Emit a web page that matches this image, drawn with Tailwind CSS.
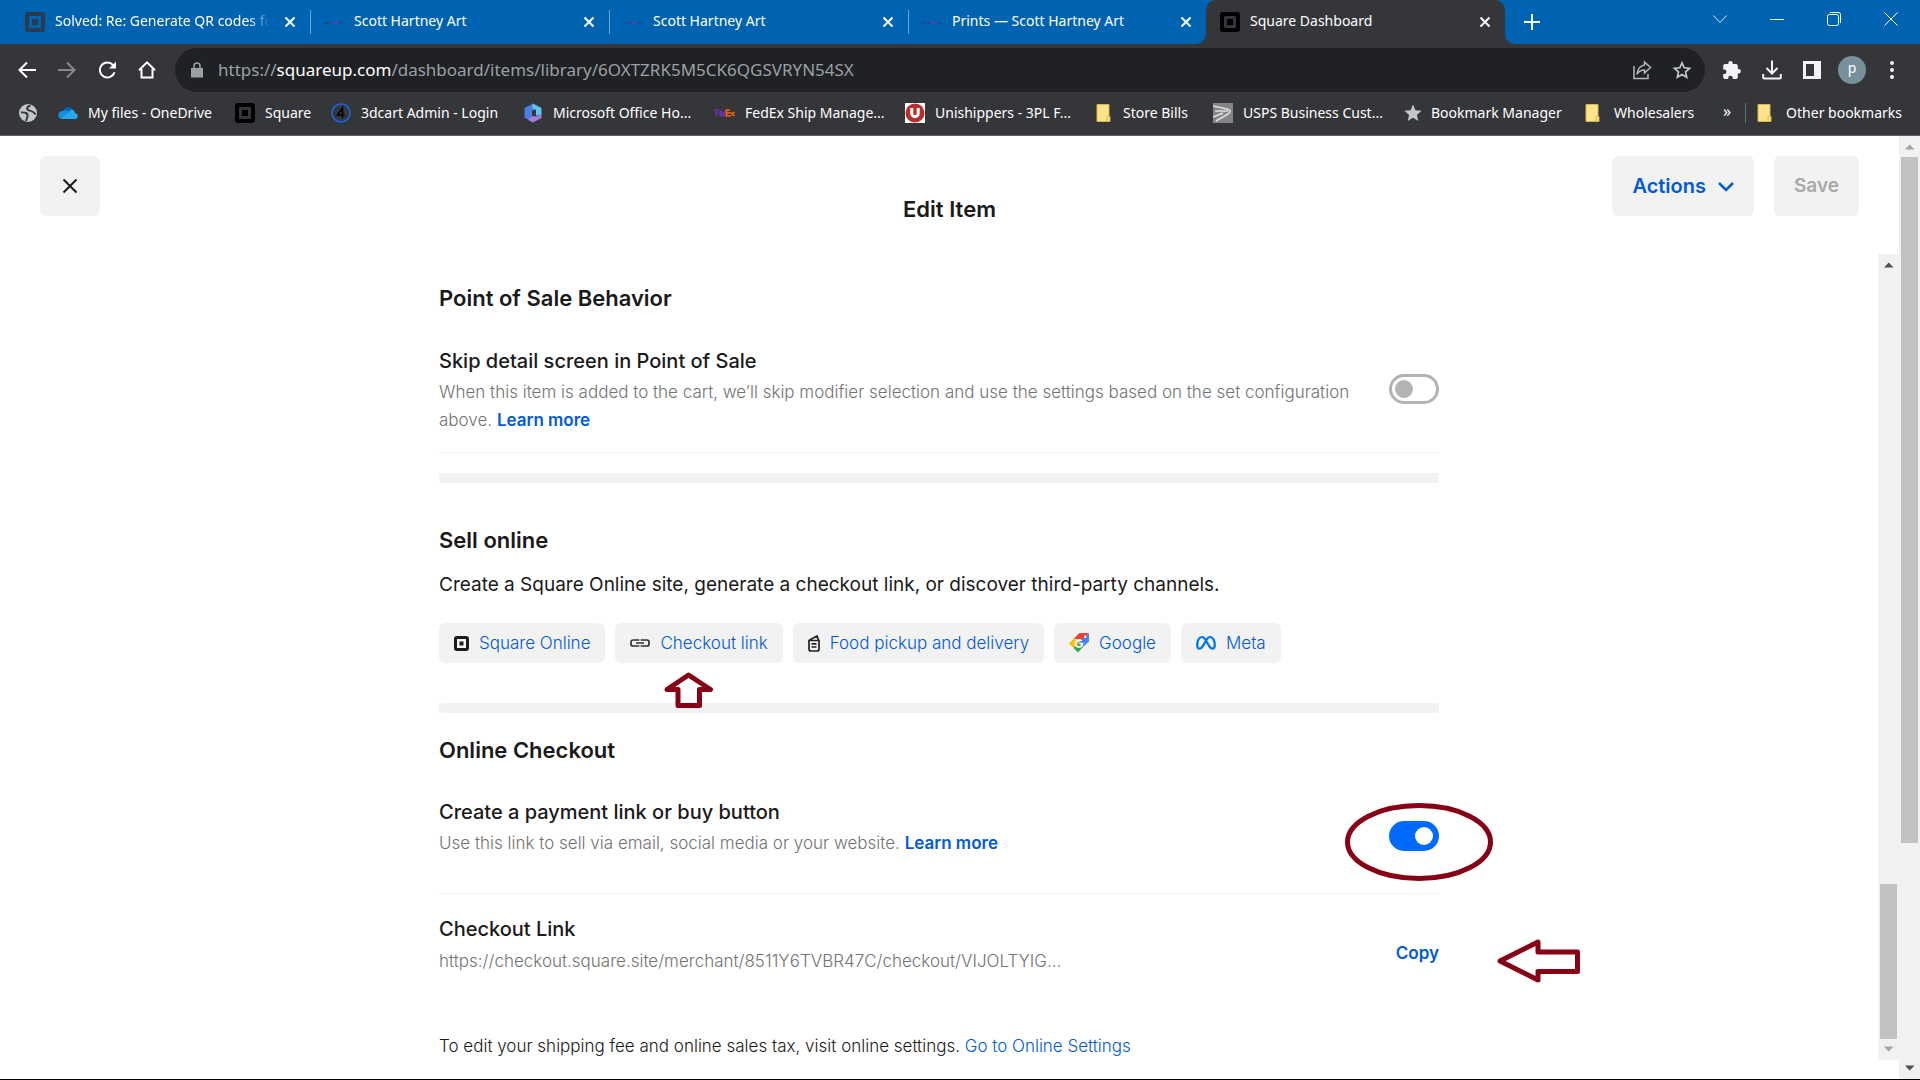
<!DOCTYPE html>
<html lang="en">
<head>
    <meta charset="UTF-8">
    <meta name="viewport" content="width=device-width, initial-scale=1.0">
    <title>Square Dashboard</title>
    <script src="https://cdn.jsdelivr.net/npm/@tailwindcss/browser@4"></script>
</head>
<body class="min-h-screen flex flex-col bg-white font-['Inter',sans-serif] text-[#1a1a1a] overflow-x-hidden">

    <!-- Browser window -->
    <header class="bg-[#35363a] text-white text-[15px] font-['Noto_Sans',sans-serif]">
        <div class="h-11 bg-[#0063b1] flex items-stretch pl-[11px]">
            <div class="w-[299px] pl-[14px] pr-3 flex items-center text-sm">
                <svg class="w-5 h-5 mr-[10px] shrink-0" viewBox="0 0 20 20"><rect width="20" height="20" rx="3" fill="#2b3a4f"/><rect x="4" y="4" width="12" height="12" rx="1" fill="#0063b1"/><rect x="7" y="7" width="6" height="6" fill="#2b3a4f"/></svg>
                <span class="flex-1 min-w-0 overflow-hidden whitespace-nowrap mask-r-from-90% -mt-0.5">Solved: Re: Generate QR codes for items</span>
                <button aria-label="Close tab" class="ml-3"><svg class="w-4 h-4" viewBox="0 0 16 16" stroke="#fff" stroke-width="2"><path d="M3.500 3.500l9 9M12.500 3.500l-9 9"/></svg></button>
            </div>
            <div class="w-[299px] pl-[14px] pr-3 flex items-center text-sm relative">
                <span class="absolute left-0 w-px h-6 bg-[#6aa5d8]"></span>
                <svg class="w-5 h-5 mr-[10px] shrink-0" viewBox="0 0 20 20" stroke="#1b4c93" stroke-width="2"><path d="M0 11h4M5 11h3M15 11h4"/><path d="M8 11h6" stroke="#4a3fc0"/></svg>
                <span class="flex-1 min-w-0 overflow-hidden whitespace-nowrap -mt-0.5">Scott Hartney Art</span>
                <button aria-label="Close tab" class="ml-3"><svg class="w-4 h-4" viewBox="0 0 16 16" stroke="#fff" stroke-width="2"><path d="M3.500 3.500l9 9M12.500 3.500l-9 9"/></svg></button>
            </div>
            <div class="w-[299px] pl-[14px] pr-3 flex items-center text-sm relative">
                <span class="absolute left-0 w-px h-6 bg-[#6aa5d8]"></span>
                <svg class="w-5 h-5 mr-[10px] shrink-0" viewBox="0 0 20 20" stroke="#1b4c93" stroke-width="2"><path d="M0 11h4M5 11h3M15 11h4"/><path d="M8 11h6" stroke="#4a3fc0"/></svg>
                <span class="flex-1 min-w-0 overflow-hidden whitespace-nowrap -mt-0.5">Scott Hartney Art</span>
                <button aria-label="Close tab" class="ml-3"><svg class="w-4 h-4" viewBox="0 0 16 16" stroke="#fff" stroke-width="2"><path d="M3.500 3.500l9 9M12.500 3.500l-9 9"/></svg></button>
            </div>
            <div class="w-[298px] pl-[14px] pr-3 flex items-center text-sm relative">
                <span class="absolute left-0 w-px h-6 bg-[#6aa5d8]"></span>
                <svg class="w-5 h-5 mr-[10px] shrink-0" viewBox="0 0 20 20" stroke="#1b4c93" stroke-width="2"><path d="M0 11h4M5 11h3M15 11h4"/><path d="M8 11h6" stroke="#4a3fc0"/></svg>
                <span class="flex-1 min-w-0 overflow-hidden whitespace-nowrap -mt-0.5">Prints — Scott Hartney Art</span>
                <button aria-label="Close tab" class="ml-3"><svg class="w-4 h-4" viewBox="0 0 16 16" stroke="#fff" stroke-width="2"><path d="M3.500 3.500l9 9M12.500 3.500l-9 9"/></svg></button>
            </div>
            <div class="w-[299px] pl-[14px] pr-3 flex items-center text-sm relative bg-[#35363a] rounded-t-[10px]">
                <svg class="absolute -left-[10px] bottom-0 w-[10px] h-[10px]" viewBox="0 0 10 10"><path d="M10 0v10H0A10 10 0 0 0 10 0z" fill="#35363a"/></svg>
                <svg class="absolute -right-[10px] bottom-0 w-[10px] h-[10px]" viewBox="0 0 10 10"><path d="M0 0v10h10A10 10 0 0 1 0 0z" fill="#35363a"/></svg>
                <svg class="w-5 h-5 mr-[10px] shrink-0" viewBox="0 0 20 20"><rect width="20" height="20" rx="3" fill="#000"/><rect x="4" y="4" width="12" height="12" rx="1" fill="#35363a"/><rect x="7" y="7" width="6" height="6" fill="#000"/></svg>
                <span class="flex-1 min-w-0 overflow-hidden whitespace-nowrap -mt-0.5">Square Dashboard</span>
                <button aria-label="Close tab" class="ml-3"><svg class="w-4 h-4" viewBox="0 0 16 16" stroke="#fff" stroke-width="2"><path d="M3.500 3.500l9 9M12.500 3.500l-9 9"/></svg></button>
            </div>
            <button aria-label="New tab" class="ml-[19px]"><svg class="w-4 h-4" viewBox="0 0 16 16" stroke="#fff" stroke-width="2"><path d="M8 0v16M0 8h16"/></svg></button>
            <div class="ml-auto flex items-center gap-[41px] pr-[21px] pb-[6px]">
                <button aria-label="Search tabs"><svg class="w-4 h-4" viewBox="0 0 16 16" stroke="#dbe9f5" fill="none"><path d="M1.500 4.500l6.500 7 6.500-7"/></svg></button>
                <button aria-label="Minimize"><svg class="w-4 h-4" viewBox="0 0 16 16" stroke="#fff"><path d="M1 8.500h14"/></svg></button>
                <button aria-label="Restore"><svg class="w-4 h-4" viewBox="0 0 16 16" stroke="#fff" fill="none"><rect x="1.500" y="3.500" width="11" height="11" rx="2"/><path d="M4 1.500h8.500a2 2 0 0 1 2 2V12"/></svg></button>
                <button aria-label="Close"><svg class="w-4 h-4" viewBox="0 0 16 16" stroke="#fff"><path d="M1.500 1.500l13 13M14.500 1.500l-13 13"/></svg></button>
            </div>
        </div>

        <div class="h-12 pt-1 flex items-center pl-[17px] pr-[18px]">
            <div class="flex gap-5 items-center mr-[18px]">
                <button aria-label="Back"><svg class="w-5 h-5" viewBox="0 0 20 20" stroke="#fff" stroke-width="2" fill="none"><path d="M19 10H3M10 2.500L2.500 10l7.500 7.500"/></svg></button>
                <button aria-label="Forward"><svg class="w-5 h-5" viewBox="0 0 20 20" stroke="#87888b" stroke-width="2" fill="none"><path d="M1 10h16M10 2.500l7.500 7.500-7.500 7.500"/></svg></button>
                <button aria-label="Reload"><svg class="w-5 h-5" viewBox="0 0 20 20" stroke="#fff" stroke-width="2" fill="none"><path d="M17.500 12.200A7.500 7.500 0 1 1 16 5"/><path d="M19 1.500v7h-7z" fill="#fff" stroke="none"/></svg></button>
                <button aria-label="Home"><svg class="w-5 h-5" viewBox="0 0 20 20" stroke="#fff" stroke-width="2" fill="none"><path d="M2 10.300L10 2.400l8 7.900M4.500 9v8.500h11V9"/></svg></button>
            </div>
            <div class="flex-1 h-11 rounded-full bg-[#202124] flex items-center pl-[15px] pr-[13px]">
                <svg class="w-[14px] h-4 mr-[14px]" viewBox="0 0 14 16"><path d="M1 6h12v9.500H1z" fill="#9aa0a6"/><path d="M4 7V4a3 3 0 0 1 6 0v3" stroke="#9aa0a6" stroke-width="1.600" fill="none"/></svg>
                <div class="flex-1 text-[17px] leading-6 text-[#9aa0a6] whitespace-nowrap">https://<span class="text-white">squareup.com</span>/dashboard/items/library/6OXTZRK5M5CK6QGSVRYN54SX</div>
                <button aria-label="Share" class="mr-5"><svg class="w-5 h-5" viewBox="0 0 20 20" stroke="#b4b7bb" stroke-width="1.500" fill="none"><path d="M2 6v12.500h14V14M12.500 5V2l6 5.500-6 5.500v-3C9 10 6.500 11.500 5 14.500 5.300 9.500 8 5.800 12.500 5z"/></svg></button>
                <button aria-label="Bookmark"><svg class="w-5 h-5" viewBox="0 0 20 20" stroke="#c4c7cb" stroke-width="1.700" fill="none"><path d="M10 2.800l2.200 5 5.400.5-4.100 3.600 1.200 5.300-4.700-2.800-4.700 2.800 1.200-5.300-4.100-3.600 5.400-.5z"/></svg></button>
            </div>
            <div class="flex gap-5 items-center ml-[17px]">
                <button aria-label="Extensions"><svg class="w-5 h-5" viewBox="0 0 20 20" fill="#f1f3f4"><path d="M8.500 1a2.200 2.200 0 0 1 2.200 2.200V4H14a1.800 1.800 0 0 1 1.800 1.800V9h.8a2.200 2.200 0 0 1 0 4.500h-.8v3.700A1.800 1.800 0 0 1 14 19h-3.200v-1a2.300 2.300 0 0 0-4.600 0v1H3a1.800 1.800 0 0 1-1.800-1.800V14h1a2.300 2.300 0 0 0 0-4.600h-1V5.800A1.800 1.800 0 0 1 3 4h3.300v-.8A2.200 2.200 0 0 1 8.500 1z"/></svg></button>
                <button aria-label="Downloads"><svg class="w-5 h-5" viewBox="0 0 20 20" stroke="#f1f3f4" stroke-width="2" fill="none"><path d="M10 .5V13M4.500 8l5.500 5.500L15.500 8M1.200 14v3.500a1 1 0 0 0 1 1h15.600a1 1 0 0 0 1-1V14"/></svg></button>
                <button aria-label="Side panel"><svg class="w-5 h-5" viewBox="0 0 20 20"><path d="M1 1h18v18H1z" fill="#f1f3f4"/><path d="M4 4h8v12H4z" fill="#35363a"/></svg></button>
                <button aria-label="Profile" class="w-7 h-7 -mx-1 rounded-full bg-[#78909c] text-sm leading-6 pb-1">p</button>
                <button aria-label="Menu"><svg class="w-5 h-5" viewBox="0 0 20 20" fill="#f1f3f4"><circle cx="10" cy="3" r="2"/><circle cx="10" cy="10" r="2"/><circle cx="10" cy="17" r="2"/></svg></button>
            </div>
        </div>

        <nav class="h-11 pb-[2px] border-b border-[#5f6063] flex items-center pl-[18px] pr-[18px] text-sm whitespace-nowrap">
            <a href="#" aria-label="Globe" class="w-10 shrink-0"><svg class="w-5 h-5" viewBox="0 0 20 20"><circle cx="10" cy="10" r="9" fill="#c3c6c9"/><path d="M3 9.500c4-.5 7 .5 6.500 4L8 18M12.500 2.500c-3 1-4.500 2.500-2.500 4.500 3 1 6 1.500 7.500 4.500" stroke="#35363a" stroke-width="2" fill="none"/></svg></a>
            <a href="#" class="w-[177px] shrink-0 flex items-center gap-[10px]"><svg class="w-5 h-5" viewBox="0 0 20 20"><path d="M5 8a5.500 5.500 0 0 1 10-1l-5 6z" fill="#0364b8"/><path d="M5 8c3-1 5 0 7 2l-9 6C-1.500 14 0 8 5 8z" fill="#1490df"/><path d="M11 9c1-3 5-3 6 1 4 .5 3.500 6 0 6H3z" fill="#28a8ea"/></svg>My files - OneDrive</a>
            <a href="#" class="w-24 shrink-0 flex items-center gap-[10px]"><svg class="w-5 h-5" viewBox="0 0 20 20"><rect width="20" height="20" rx="3" fill="#000"/><rect x="4" y="4" width="12" height="12" rx="1" fill="#35363a"/><rect x="7" y="7" width="6" height="6" fill="#000"/></svg>Square</a>
            <a href="#" class="w-48 shrink-0 flex items-center gap-[10px]"><svg class="w-5 h-5" viewBox="0 0 20 20"><circle cx="10" cy="10" r="9" fill="none" stroke="#1a66e8" stroke-width="1.500"/><path d="M11.500 15V5L6.500 12h7" fill="none" stroke="#000" stroke-width="1.500"/></svg>3dcart Admin - Login</a>
            <a href="#" class="w-48 shrink-0 flex items-center gap-[10px]"><svg class="w-5 h-5" viewBox="0 0 20 20"><path d="M10 .5L1.500 5v9.500L6 17l3-4V8l5-3z" fill="#4a7fe0"/><path d="M10 .5l8.500 4.500v6L13 13V7L9 5z" fill="#5fc4ee"/><path d="M18.500 10v5L10 19.500 5 17l4-4 5 .5z" fill="#a77be6"/></svg>Microsoft Office Ho...</a>
            <a href="#" class="w-[190px] shrink-0 flex items-center gap-[10px]"><svg class="w-5 h-5" viewBox="0 0 20 20" stroke-width="1.500" fill="none"><path d="M1 13V7h3M1 10h2M7 8.500H5v4h2M5 10.500h2M10 7v5.500H8v-3h2" stroke="#6a35b0"/><path d="M15 7h-3.500v6H15M12 10h3M15.500 9l4 4M19.500 9l-4 4" stroke="#ff6600"/></svg>FedEx Ship Manage...</a>
            <a href="#" class="w-[190px] shrink-0 flex items-center gap-[10px]"><svg class="w-5 h-5" viewBox="0 0 20 20"><path d="M0 0h20v20H0z" fill="#fff"/><circle cx="10" cy="10" r="9.500" fill="#b5302c"/><path d="M6.800 5v5.500a3.200 3.200 0 0 0 6.400 0V5" stroke="#fff" stroke-width="3" fill="none"/></svg>Unishippers - 3PL F...</a>
            <a href="#" class="w-[118px] shrink-0 flex items-center gap-2"><svg class="w-5 h-5" viewBox="0 0 20 20"><path d="M2 1.500h12v17H2z" fill="#ffe38a" stroke="#d9b64a"/><path d="M12 13.500h3v5h-3z" fill="#ffe38a" stroke="#d9b64a"/></svg>Store Bills</a>
            <a href="#" class="w-[190px] shrink-0 flex items-center gap-[10px]"><svg class="w-5 h-5" viewBox="0 0 20 20"><path d="M0 0h20v20H0z" fill="#858585"/><path d="M0 3l14 3c4 1 4 3 1 5L3 18M2 8h13M0 14l10-4" stroke="#e0e0e0" stroke-width="1.600" fill="none"/></svg>USPS Business Cust...</a>
            <a href="#" class="w-[181px] shrink-0 flex items-center gap-2"><svg class="w-5 h-5" viewBox="0 0 20 20"><path d="M10 1.500l2.400 5.800 6.200.5-4.700 4.100 1.400 6.100-5.300-3.300L4.700 18l1.400-6.100-4.700-4.100 6.200-.5z" fill="#c3c6c9"/></svg>Bookmark Manager</a>
            <a href="#" class="shrink-0 flex items-center gap-[10px]"><svg class="w-5 h-5" viewBox="0 0 20 20"><path d="M2 1.500h12v17H2z" fill="#ffe38a" stroke="#d9b64a"/><path d="M12 13.500h3v5h-3z" fill="#ffe38a" stroke="#d9b64a"/></svg>Wholesalers</a>
            <button class="ml-auto mr-[14px] -mt-1 text-base">»</button>
            <span class="w-px h-5 bg-[#6b6c70] mr-[10px]"></span>
            <a href="#" class="shrink-0 flex items-center gap-[10px]"><svg class="w-5 h-5" viewBox="0 0 20 20"><path d="M2 1.500h12v17H2z" fill="#ffe38a" stroke="#d9b64a"/><path d="M12 13.500h3v5h-3z" fill="#ffe38a" stroke="#d9b64a"/></svg>Other bookmarks</a>
        </nav>
    </header>

    <!-- Page -->
    <div class="flex-1 flex border-b-2 border-black">
        <div class="flex-1 min-w-0 flex flex-col pb-[19px]">
            <div class="h-[118px] px-10 pt-5 grid grid-cols-[1fr_auto_1fr] items-start">
                <button aria-label="Close editor" class="w-15 h-15 rounded-md bg-[#f2f2f2] flex items-center justify-center"><svg class="w-4 h-4" viewBox="0 0 16 16" stroke="#1a1a1a" stroke-width="2"><path d="M1.500 1.500l13 13M14.500 1.500l-13 13"/></svg></button>
                <h1 class="text-[22px] leading-7 font-semibold pt-[39px]">Edit Item</h1>
                <div class="flex gap-5 justify-end text-xl font-semibold">
                    <button class="h-15 px-5 rounded-md bg-[#f2f2f2] text-[#005ad9] flex items-center gap-3">Actions <svg class="w-4 h-4" viewBox="0 0 16 16" stroke="#005ad9" stroke-width="2.500" fill="none"><path d="M1 5l7 7 7-7"/></svg></button>
                    <button class="h-15 px-5 rounded-md bg-[#f2f2f2] text-[#a8a8a8] text-[19px] leading-7" disabled>Save</button>
                </div>
            </div>

            <div class="flex-1 flex">
                <main class="flex-1 min-w-0 pt-[30px]">
                    <div class="w-full max-w-[1000px] mx-auto">
                        <section>
                            <h2 class="text-[22px] leading-7 font-semibold">Point of Sale Behavior</h2>
                            <div class="mt-[35px] pb-[18px] border-b border-[#f0f0f0] flex">
                                <div class="flex-1">
                                    <label for="skip" class="block text-xl leading-7 font-medium">Skip detail screen in Point of Sale</label>
                                    <p class="mt-[3px] text-[17px] leading-7 font-light text-[#737373]">When this item is added to the cart, we’ll skip modifier selection and use the settings based on the set configuration above. <a href="#" class="font-semibold text-[#005ad9]">Learn more</a></p>
                                </div>
                                <input id="skip" type="checkbox" class="appearance-none shrink-0 mt-[27px] ml-7 w-[50px] h-[30px] rounded-full border-[3px] border-[#b3b3b3] p-[3px] before:block before:w-[18px] before:h-[18px] before:rounded-full before:bg-[#b3b3b3]">
                            </div>
                        </section>

                        <div class="mt-5 h-[10px] rounded-xs bg-[#f2f2f2]"></div>

                        <section class="mt-[43px]">
                            <h2 class="text-[22px] leading-7 font-semibold">Sell online</h2>
                            <p class="mt-[17px] text-[19px] leading-7">Create a Square Online site, generate a checkout link, or discover third-party channels.</p>
                            <div class="mt-6 flex gap-[10px] text-[17px] leading-6 font-light text-[#005ad9]">
                                <button class="h-10 px-[15px] rounded-md bg-[#f2f2f2] flex items-center gap-[10px]"><svg class="w-[15px] h-[15px]" viewBox="0 0 15 15"><rect x="1.500" y="1.500" width="12" height="12" rx="1.500" fill="none" stroke="#1a1a1a" stroke-width="3"/><path d="M5.500 5.500h4v4h-4z" fill="#1a1a1a"/></svg>Square Online</button>
                                <div class="relative">
                                    <button class="h-10 px-[15px] rounded-md bg-[#f2f2f2] flex items-center gap-[10px]"><svg class="w-5 h-5" viewBox="0 0 20 20" stroke="#333" stroke-width="1.700" fill="none"><path d="M8.500 7.800V7H3a2 2 0 0 0-2 2v2a2 2 0 0 0 2 2h5.500v-.8M11.500 7.800V7H17a2 2 0 0 1 2 2v2a2 2 0 0 1-2 2h-5.500v-.8M6 10h8"/></svg>Checkout link</button>
                                    <svg class="absolute left-[49px] top-[49px] w-[50px] h-[37px]" viewBox="0 0 50 37" stroke="#880015" stroke-width="5" stroke-linejoin="round" fill="#fff"><path d="M24.500 3L46.500 17.500H35.500V33.500H14V17.500H3z"/></svg>
                                </div>
                                <button class="h-10 px-[15px] rounded-md bg-[#f2f2f2] flex items-center gap-[10px]"><svg class="w-3 h-[17px]" viewBox="0 0 12 17" stroke="#222" stroke-width="1.700" fill="none"><path d="M1 5.500h10V14a2 2 0 0 1-2 2H3a2 2 0 0 1-2-2zM1.500 5L9 1l1.500 4M3.500 8.800h5M3.500 12h5"/></svg>Food pickup and delivery</button>
                                <button class="h-10 px-[15px] rounded-md bg-[#f2f2f2] flex items-center gap-[10px]"><svg class="w-5 h-5" viewBox="0 0 20 20"><path d="M10.500 0H20l-7 8-8-2.500z" fill="#ea4335"/><path d="M20 0v8.500L14 14l-5-4z" fill="#4285f4"/><path d="M5 5.500L0 10.500 4.500 15l6-5z" fill="#fbbc04"/><path d="M4.500 15L9 19.500l5-5.500-4-4z" fill="#34a853"/><circle cx="16.200" cy="3.800" r="1.200" fill="#fff"/><path d="M12.500 8A3.500 3.500 0 1 0 13.500 10.500H10.500" stroke="#fff" stroke-width="1.700" fill="none"/></svg>Google</button>
                                <button class="h-10 px-[15px] rounded-md bg-[#f2f2f2] flex items-center gap-[10px]"><svg class="w-5 h-5" viewBox="0 0 20 20" stroke="#0075f0" stroke-width="2.200" fill="none"><path d="M10 7.500C8.700 5 7.400 4 5.800 4 3 4 1.200 8 1.200 12c0 2.500.9 3.700 2.400 3.700 2 0 3-1.800 6.400-8.200C11.400 5 12.500 4 14.300 4c2.600 0 4.500 4 4.500 8 0 2.500-.9 3.700-2.400 3.700-2 0-2.900-1.800-6.400-8.200z"/></svg>Meta</button>
                            </div>
                        </section>

                        <div class="mt-10 h-[10px] rounded-xs bg-[#f2f2f2]"></div>

                        <section class="mt-[23px]">
                            <h2 class="text-[22px] leading-7 font-semibold">Online Checkout</h2>
                            <div class="mt-[34px] pb-9 border-b border-[#f0f0f0] flex">
                                <div class="flex-1">
                                    <label for="paylink" class="block text-xl leading-7 font-medium">Create a payment link or buy button</label>
                                    <p class="mt-[3px] text-[17px] leading-7 font-light text-[#737373]">Use this link to sell via email, social media or your website. <a href="#" class="font-semibold text-[#005ad9]">Learn more</a></p>
                                </div>
                                <div class="relative mt-[23px] h-[30px]">
                                    <input id="paylink" type="checkbox" checked class="block appearance-none w-[50px] h-[30px] rounded-full bg-[#006aff] py-[6px] pl-[26px] before:block before:w-[18px] before:h-[18px] before:rounded-full before:bg-white">
                                    <svg class="absolute -left-11 -top-[18px] w-[149px] h-[78px] max-w-none pointer-events-none" viewBox="0 0 149 78" fill="none" stroke="#880015" stroke-width="5"><ellipse cx="74" cy="39" rx="71.500" ry="36.500"/></svg>
                                </div>
                            </div>
                            <div class="mt-[21px] flex">
                                <div class="flex-1">
                                    <h3 class="text-xl leading-7 font-medium">Checkout Link</h3>
                                    <p class="mt-1 text-[17px] leading-7 font-light text-[#737373]">https://checkout.square.site/merchant/8511Y6TVBR47C/checkout/VIJOLTYIG...</p>
                                </div>
                                <div class="relative mt-6 h-7">
                                    <button class="text-[17px] leading-7 font-semibold text-[#005ad9]">Copy</button>
                                    <svg class="absolute left-[101px] top-0 w-[84px] h-[44px] max-w-none" viewBox="0 0 84 44" stroke="#880015" stroke-width="5" stroke-linejoin="round" fill="none"><path d="M3 22L41 3V13H80.500V32.500H41V41z"/></svg>
                                </div>
                            </div>
                            <p class="mt-[57px] text-[17px] leading-7 font-light">To edit your shipping fee and online sales tax, visit online settings. <a href="#" class="text-[#005ad9]">Go to Online Settings</a></p>
                        </section>
                    </div>
                </main>
                <!-- editor scrollbar -->
                <div class="w-[21px] bg-[#f1f1f1] flex flex-col items-center">
                    <svg class="w-[21px] h-[21px]" viewBox="0 0 21 21"><path d="M6 13.500h9.500L10.700 8.500z" fill="#505050"/></svg>
                    <div class="mt-auto w-[17px] h-[155px] bg-[#c1c1c1]"></div>
                    <svg class="w-[21px] h-[21px]" viewBox="0 0 21 21"><path d="M6 7.500h9.500l-4.800 5z" fill="#a3a3a3"/></svg>
                </div>
            </div>
        </div>
        <!-- window scrollbar -->
        <div class="w-[21px] bg-[#f1f1f1] flex flex-col items-center">
            <svg class="w-[21px] h-[21px]" viewBox="0 0 21 21"><path d="M6 13.500h9.500L10.700 8.500z" fill="#a3a3a3"/></svg>
            <div class="w-[17px] h-[686px] bg-[#c1c1c1]"></div>
            <svg class="mt-auto w-[21px] h-[21px]" viewBox="0 0 21 21"><path d="M6 7.500h9.500l-4.800 5z" fill="#505050"/></svg>
        </div>
    </div>
</body>
</html>
